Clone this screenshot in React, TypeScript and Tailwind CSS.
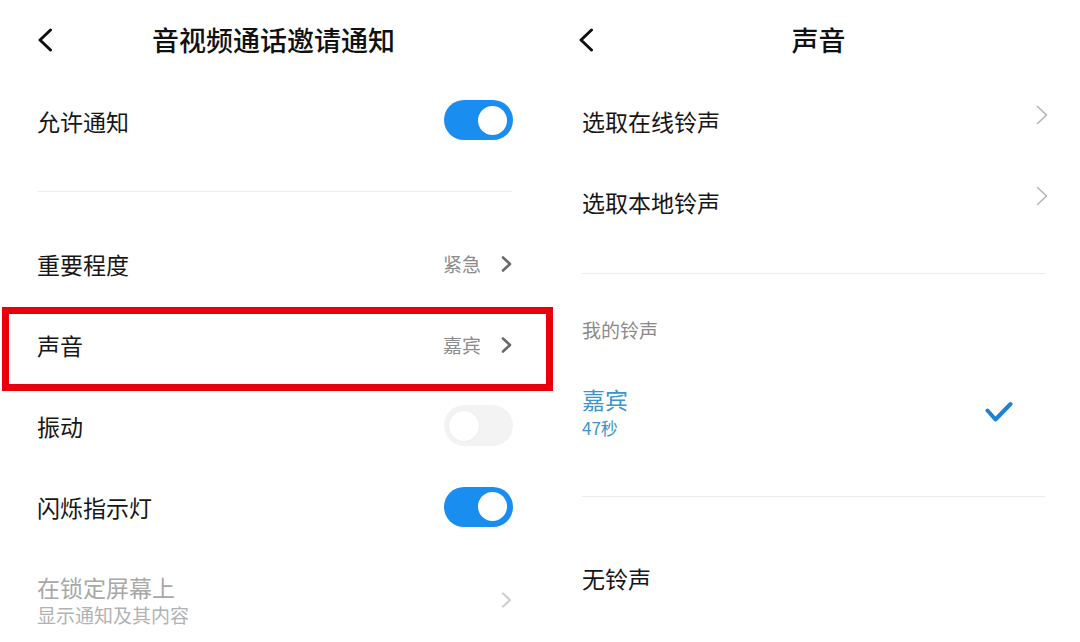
import React from "react";

const FONT = { fontFamily: '"Noto Sans CJK SC", "Noto Sans", sans-serif' };

function Back() {
  return (
    <svg width="16" height="24" viewBox="0 0 16 24" fill="none">
      <path d="M13.5 2 L3 12 L13.5 22" stroke="#111" strokeWidth="3" strokeLinecap="round" strokeLinejoin="round" />
    </svg>
  );
}

function Chevron({ color = "#6b6b6b", width = 2.6 }: { color?: string; width?: number }) {
  return (
    <svg width="11" height="16" viewBox="0 0 11 16" fill="none">
      <path d="M2 1.5 L9 8 L2 14.5" stroke={color} strokeWidth={width} strokeLinecap="round" strokeLinejoin="round" />
    </svg>
  );
}

function ThinChevron() {
  return (
    <svg width="12" height="20" viewBox="0 0 12 20" fill="none">
      <path d="M1.5 1.5 L10.5 10 L1.5 18.5" stroke="#b4b4b4" strokeWidth="1.6" strokeLinecap="round" strokeLinejoin="round" />
    </svg>
  );
}

function Toggle({ on }: { on: boolean }) {
  if (on) {
    return (
      <div className="flex h-[40px] w-[69px] items-center justify-end rounded-full bg-[#1a8ef0] px-[6px]">
        <div className="h-[29px] w-[29px] rounded-full bg-white" />
      </div>
    );
  }
  return (
    <div className="flex h-[41px] w-[69px] items-center justify-start rounded-full bg-[#f3f3f3] px-[5px]">
      <div className="h-[30px] w-[30px] rounded-full bg-white shadow-[0_0_3px_rgba(0,0,0,0.06)]" />
    </div>
  );
}

function ValueRow({ label, value }: { label: string; value: string }) {
  return (
    <div className="flex h-[81px] items-center justify-between pl-[37px] pr-[31px]">
      <span className="text-[23px] leading-[30px] text-[#161616]">{label}</span>
      <div className="flex items-center gap-[20px]">
        <span className="text-[19px] leading-[24px] text-[#8c8c8c]">{value}</span>
        <Chevron />
      </div>
    </div>
  );
}

function ToggleRow({ label, on }: { label: string; on: boolean }) {
  return (
    <div className="flex h-[81px] items-center justify-between pl-[37px] pr-[30px]">
      <span className="text-[23px] leading-[30px] text-[#161616]">{label}</span>
      <Toggle on={on} />
    </div>
  );
}

function LinkRow({ label }: { label: string }) {
  return (
    <div className="flex h-[81px] items-center justify-between pl-[39px] pr-[32px]">
      <span className="text-[23px] leading-[30px] text-[#161616]">{label}</span>
      <div className="mb-[12px]">
        <ThinChevron />
      </div>
    </div>
  );
}

export default function App() {
  return (
    <div className="relative flex h-[642px] w-[1080px] overflow-hidden bg-white" style={FONT}>
      {/* Left screen */}
      <div className="flex w-[543px] shrink-0 flex-col">
        <div className="flex h-[80px] items-center pl-[37px] pr-[34px]">
          <Back />
          <div className="flex-1 text-center text-[27px] font-medium leading-[34px] text-[#111]">
            音视频通话邀请通知
          </div>
          <div className="w-[15px]" />
        </div>

        <div className="flex h-[82px] items-center justify-between pl-[37px] pr-[30px]">
          <span className="text-[23px] leading-[30px] text-[#161616]">允许通知</span>
          <div className="mb-[2px]">
            <Toggle on />
          </div>
        </div>

        <div className="ml-[37px] mr-[31px] mt-[29px] h-px bg-[#ededed]" />

        <div className="mt-[31px]">
          <ValueRow label="重要程度" value="紧急" />
          <ValueRow label="声音" value="嘉宾" />
          <ToggleRow label="振动" on={false} />
          <ToggleRow label="闪烁指示灯" on />
          <div className="flex items-start justify-between pl-[37px] pr-[31px] pt-[27px]">
            <div className="flex flex-col">
              <span className="text-[23px] leading-[26px] text-[#a8a8a8]">在锁定屏幕上</span>
              <span className="mt-[4px] text-[19px] leading-[22px] text-[#b2b2b2]">显示通知及其内容</span>
            </div>
            <div className="mt-[18px]">
              <Chevron color="#cfcfcf" width={2.2} />
            </div>
          </div>
        </div>
      </div>

      {/* Right screen */}
      <div className="flex flex-1 flex-col">
        <div className="flex h-[80px] items-center pl-[35px] pr-[37px]">
          <Back />
          <div className="flex-1 text-center text-[27px] font-medium leading-[34px] text-[#111]">声音</div>
        </div>

        <LinkRow label="选取在线铃声" />
        <LinkRow label="选取本地铃声" />

        <div className="ml-[39px] mr-[35px] mt-[31px] h-px bg-[#ececec]" />

        <div className="pl-[39px] pt-[45px] text-[19px] leading-[22px] text-[#8a8a8a]">我的铃声</div>

        <div className="mt-[44px] flex items-center justify-between pl-[39px] pr-[67px]">
          <div className="flex flex-col">
            <span className="text-[23px] leading-[28px] text-[#3a95cd]">嘉宾</span>
            <span className="mt-[4px] text-[17px] leading-[22px] text-[#3a95cd]">47秒</span>
          </div>
          <svg width="28" height="22" viewBox="0 0 28 22" fill="none">
            <path d="M2.5 9.5 L10.5 18.5 L25.5 3" stroke="#1f80d4" strokeWidth="4" strokeLinecap="round" strokeLinejoin="round" />
          </svg>
        </div>

        <div className="ml-[39px] mr-[35px] mt-[57px] h-px bg-[#ececec]" />

        <div className="pl-[39px] pt-[66px] text-[23px] leading-[30px] text-[#161616]">无铃声</div>
      </div>

      {/* Red annotation box */}
      <div className="absolute left-[2px] top-[307px] h-[84px] w-[551px] border-[7px] border-[#e8000c]" />
    </div>
  );
}
